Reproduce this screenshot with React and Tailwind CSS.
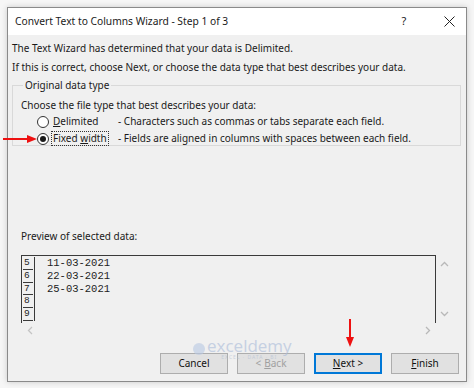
import React from "react";

const ui = { fontFamily: '"Noto Sans", "Liberation Sans", sans-serif' };
const mono = { fontFamily: '"Liberation Mono", "Courier New", monospace' };

function Radio({ checked }) {
  return (
    <span className="relative inline-flex w-[12px] h-[12px] rounded-full border border-[#333] bg-white items-center justify-center shrink-0">
      {checked && <span className="w-[6px] h-[6px] rounded-full bg-[#1a1a1a]" />}
    </span>
  );
}

function Btn({ children, primary, disabled }) {
  return (
    <div
      className={
        "w-[68px] h-[21px] flex items-center justify-center text-[10px] bg-[#e1e1e1] " +
        (primary ? "border-2 border-[#0078d7]" : "border border-[#adadad]") +
        (disabled ? " text-[#a0a0a0]" : " text-[#111]")
      }
    >
      {children}
    </div>
  );
}

export default function App() {
  const rows = [
    ["5", "11-03-2021"],
    ["6", "22-03-2021"],
    ["7", "25-03-2021"],
    ["8", ""],
    ["9", ""],
  ];
  return (
    <div className="relative w-[474px] h-[388px] bg-[#f6f6f6] pt-[7px] pl-[7px] overflow-hidden" style={ui}>
      <div className="w-[460px] h-[375px] border border-[#8a8a8a] flex flex-col bg-[#f0f0f0] shadow-[0_0_6px_rgba(0,0,0,0.18)]">
        {/* title bar */}
        <div className="h-[27px] bg-white flex items-center pl-[7px] text-[10.25px] text-[#1a1a1a] shrink-0">
          <span className="flex-1">Convert Text to Columns Wizard - Step 1 of 3</span>
          <span className="w-[12px] text-center mr-[34px] text-[11px]">?</span>
          <svg width="11" height="11" viewBox="0 0 11 11" className="mr-[11px]">
            <path d="M0.5 0.5 L10.5 10.5 M10.5 0.5 L0.5 10.5" stroke="#222" strokeWidth="1" />
          </svg>
        </div>
        {/* body */}
        <div className="flex-1 flex flex-col px-[4px] pt-[5px] text-[10px] text-[#1a1a1a]">
          <div className="h-[16px] leading-[16px]">The Text Wizard has determined that your data is Delimited.</div>
          <div className="h-[16px] leading-[16px] mt-[3px]">
            If this is correct, choose Next, or choose the data type that best describes your data.
          </div>
          <fieldset className="border border-[#d9d9d9] mr-[1px] mt-[3px] h-[68px] px-[8px]">
            <legend className="px-[2px] ml-[2px] leading-[14px]">Original data type</legend>
            <div className="h-[16px] leading-[16px] mt-[5px]">Choose the file type that best describes your data:</div>
            <div className="flex items-center h-[17px] pl-[16px]">
              <Radio />
              <span className="ml-[3px] w-[66px] px-[1px]">
                <span className="underline">D</span>elimited
              </span>
              <span>- Characters such as commas or tabs separate each field.</span>
            </div>
            <div className="flex items-center h-[17px] pl-[16px]">
              <Radio checked />
              <span className="ml-[2px] w-[67px]">
                <span className="border border-dotted border-[#333] px-[1px] leading-[13px] inline-block">
                  Fixed <span className="underline">w</span>idth
                </span>
              </span>
              <span>- Fields are aligned in columns with spaces between each field.</span>
            </div>
          </fieldset>
          <div className="h-[16px] leading-[16px] mt-[82px] pl-[9px]">Preview of selected data:</div>
          {/* preview */}
          <div className="ml-[9px] mt-[11px] w-[432px] flex flex-col">
            <div className="flex h-[68px]">
              <div className="w-[415px] border-l border-t border-r border-[#3a3a3a] bg-[#f0f0f0] flex flex-col pt-[1px] overflow-hidden">
                {rows.map(([n, d]) => (
                  <div key={n} className="flex h-[12.75px] shrink-0">
                    <div
                      className="w-[13px] border-r border-[#3a3a3a] relative text-[9.5px] leading-[12px] pl-[2px] text-[#222]"
                      style={mono}
                    >
                      {n}
                      <span className="absolute left-[1px] right-[1px] bottom-0 h-[1px] bg-[#3a3a3a]" />
                    </div>
                    <div className="pl-[12px] text-[10.5px] leading-[12px] text-[#222]" style={mono}>
                      {d}
                    </div>
                  </div>
                ))}
              </div>
              <div className="flex-1 flex flex-col items-center justify-between py-[6px]">
                <svg width="9" height="6" viewBox="0 0 9 6">
                  <path d="M1 5 L4.5 1.5 L8 5" stroke="#b8b8b8" strokeWidth="1.3" fill="none" />
                </svg>
                <svg width="9" height="6" viewBox="0 0 9 6">
                  <path d="M1 1 L4.5 4.5 L8 1" stroke="#b8b8b8" strokeWidth="1.3" fill="none" />
                </svg>
              </div>
            </div>
            <div className="h-[14px] w-[416px] flex items-center justify-between px-[6px]">
              <svg width="6" height="9" viewBox="0 0 6 9">
                <path d="M5 1 L1.5 4.5 L5 8" stroke="#c4c4c4" strokeWidth="1.3" fill="none" />
              </svg>
              <svg width="6" height="9" viewBox="0 0 6 9">
                <path d="M1 1 L4.5 4.5 L1 8" stroke="#b8b8b8" strokeWidth="1.3" fill="none" />
              </svg>
            </div>
          </div>
          {/* buttons */}
          <div className="flex justify-end gap-[9px] mt-[16px] pr-[3px]">
            <Btn>Cancel</Btn>
            <Btn disabled>&lt; <span className="underline ml-[3px]">B</span>ack</Btn>
            <Btn primary>
              <span className="underline">N</span>ext &gt;
            </Btn>
            <Btn>
              <span className="underline">F</span>inish
            </Btn>
          </div>
        </div>
      </div>

      {/* watermark */}
      <div className="absolute left-[192px] top-[337px] flex items-center opacity-60 pointer-events-none">
        <svg width="14" height="14" viewBox="0 0 14 14">
          <circle cx="7" cy="7" r="6" fill="#b9c9e3" />
        </svg>
        <div className="flex flex-col items-center ml-[1px]">
          <span className="text-[17px] leading-[17px] text-[#a9bbd9]" style={{ fontFamily: '"Open Sans", sans-serif' }}>
            exceldemy
          </span>
          <span className="text-[5px] leading-[6px] tracking-[1px] text-[#b0bdd3]">EXCEL · DATA · BI</span>
        </div>
      </div>

      {/* red arrows */}
      <svg className="absolute left-[3px] top-[134px]" width="34" height="10" viewBox="0 0 34 10">
        <path d="M0 5 L26 5" stroke="#e11" strokeWidth="2" />
        <path d="M24 1 L34 5 L24 9 Z" fill="#e11" />
      </svg>
      <svg className="absolute left-[345px] top-[319px]" width="10" height="28" viewBox="0 0 10 28">
        <path d="M5 0 L5 20" stroke="#e11" strokeWidth="2" />
        <path d="M1 18 L5 28 L9 18 Z" fill="#e11" />
      </svg>
    </div>
  );
}
